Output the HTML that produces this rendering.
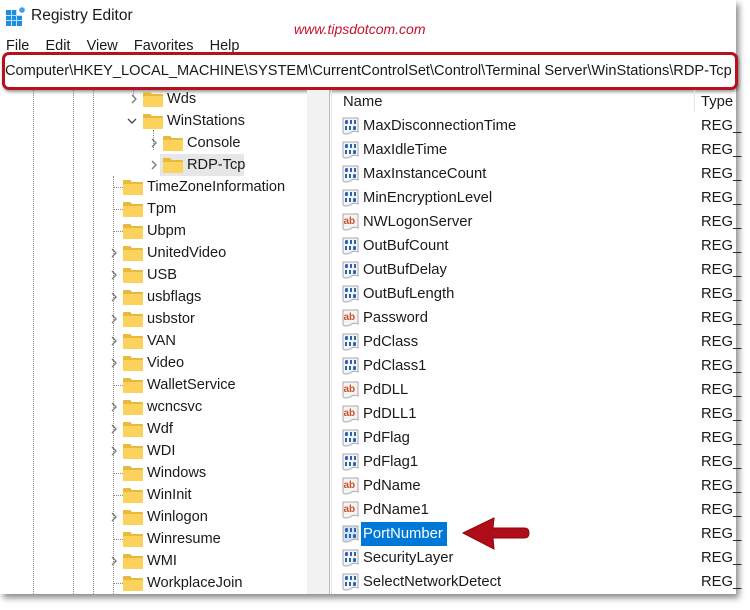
<!DOCTYPE html>
<html><head><style>
*{margin:0;padding:0;box-sizing:border-box}
body{width:750px;height:610px;background:#fff;position:relative;overflow:hidden;font-family:"Liberation Sans",sans-serif;color:#1a1a1a}
.win{position:absolute;left:0;top:0;width:736px;height:594px;background:#fff;box-shadow:3px 4px 6px rgba(0,0,0,.45)}
.a{position:absolute;white-space:nowrap}
.t{font-size:14.6px;line-height:22px;height:22px}
.r{font-size:14.8px;line-height:24px;height:24px}
.fold{position:absolute;width:20px;height:15px}
.chev{position:absolute;width:8px;height:10px}
.vd{position:absolute;width:0;border-left:1px dotted #888}
.hd{position:absolute;height:0;width:9px;border-top:1px dotted #888}
.ic{position:absolute;left:342px;width:17px;height:18px}
.ty{position:absolute;left:701px;font-size:14.8px;line-height:24px}
</style></head><body>
<div class="win">
<svg class="a" style="left:5px;top:5px" width="22" height="22" viewBox="0 0 22 22">
<rect x="1" y="5" width="16" height="16" fill="#1c8ee0"/>
<g stroke="#bfe0f8" stroke-width="1"><line x1="6.5" y1="5" x2="6.5" y2="21"/><line x1="11.5" y1="5" x2="11.5" y2="21"/><line x1="1" y1="10.5" x2="17" y2="10.5"/><line x1="1" y1="15.5" x2="17" y2="15.5"/></g>
<rect x="12" y="5" width="5" height="5" fill="#fff"/>
<circle cx="17" cy="5" r="3.3" fill="#3aa0e8" stroke="#fff" stroke-width="1"/>
</svg>
<div class="a" style="left:31px;top:7px;font-size:15.5px">Registry Editor</div>
<div class="a" style="left:294px;top:21px;font-size:14px;color:#c8102e;font-style:italic">www.tipsdotcom.com</div>
<div class="a" style="left:6px;top:38px;font-size:14.5px;word-spacing:0">File&nbsp;&nbsp;&nbsp; Edit&nbsp;&nbsp;&nbsp; View&nbsp;&nbsp;&nbsp; Favorites&nbsp;&nbsp;&nbsp; Help</div>
<div class="a" style="left:2px;top:52px;width:736px;height:38px;border:3px solid #b8101d;border-radius:7px;background:#fff;box-shadow:1px 2px 3px rgba(0,0,0,.4)"></div>
<div class="a" style="left:5px;top:63px;font-size:14.6px">Computer\HKEY_LOCAL_MACHINE\SYSTEM\CurrentControlSet\Control\Terminal Server\WinStations\RDP-Tcp</div>
<div class="a" style="left:307px;top:90px;width:22px;height:504px;background:#f2f2f2"></div>
<div class="a" style="left:329px;top:90px;width:1px;height:504px;background:#bbb"></div>
<div class="a" style="left:331px;top:90px;width:1px;height:504px;background:#e5e5e5"></div>
<div class="vd" style="left:33px;top:90px;height:504px"></div>
<div class="vd" style="left:73px;top:90px;height:504px"></div>
<div class="vd" style="left:93px;top:90px;height:504px"></div>
<div class="vd" style="left:113px;top:176px;height:418px"></div>
<div class="vd" style="left:133px;top:90px;height:6px"></div>
<div class="vd" style="left:153px;top:130px;height:20px"></div>
<div class="a" style="left:160px;top:154px;width:84px;height:22px;background:#e6e6e6"></div>
<div id="tree"></div>
<div class="a" style="left:343px;top:90px;font-size:14.8px;line-height:24px">Name</div>
<div class="a" style="left:694px;top:90px;width:1px;height:22px;background:#e5e5e5"></div>
<div class="a" style="left:701px;top:90px;font-size:14.8px;line-height:24px">Type</div>
<div class="a" style="left:361px;top:522px;width:86px;height:24px;background:#0078d7"></div>
<div id="list"></div>
<svg class="a" style="left:460px;top:515px" width="72" height="38" viewBox="0 0 72 38">
<path d="M3 18 L34 3 L33 13 L64 13 Q69 13 69 18 Q69 23 64 23 L33 23 L34 34 Z" fill="#b00d1a" stroke="#900" stroke-width="1"/>
</svg>
</div>
<script>
var T=[["Wds",143,1,0],["WinStations",143,2,0],["Console",163,1,0],["RDP-Tcp",163,1,0],["TimeZoneInformation",123,0,1],["Tpm",123,0,1],["Ubpm",123,0,1],["UnitedVideo",123,1,0],["USB",123,1,0],["usbflags",123,1,0],["usbstor",123,1,0],["VAN",123,1,0],["Video",123,1,0],["WalletService",123,0,1],["wcncsvc",123,1,0],["Wdf",123,1,0],["WDI",123,1,0],["Windows",123,0,1],["WinInit",123,0,1],["Winlogon",123,1,0],["Winresume",123,0,1],["WMI",123,1,0],["WorkplaceJoin",123,0,1]];
var h="";
T.forEach(function(e,i){var y=88+i*22,x=e[1];
h+='<svg class="fold" style="left:'+x+'px;top:'+(y+4)+'px" viewBox="0 0 20 15"><path d="M0 1 Q0 0 1 0 L7 0 L9 2 L19 2 Q20 2 20 3 L20 14 Q20 15 19 15 L1 15 Q0 15 0 14Z" fill="#e8b93a"/><rect x="0" y="4" width="20" height="11" rx="1" fill="#fbd35c"/></svg>';
if(e[2]==1)h+='<svg class="chev" style="left:'+(x-13)+'px;top:'+(y+6)+'px" viewBox="0 0 8 10"><path d="M2 1 L6 5 L2 9" fill="none" stroke="#777" stroke-width="1.3"/></svg>';
if(e[2]==2)h+='<svg class="chev" style="left:'+(x-16)+'px;top:'+(y+7)+'px;width:10px;height:8px" viewBox="0 0 10 8"><path d="M1 2 L5 6 L9 2" fill="none" stroke="#444" stroke-width="1.3"/></svg>';
if(e[3])h+='<div class="hd" style="left:114px;top:'+(y+11)+'px"></div>';
h+='<div class="a t" style="left:'+(x+24)+'px;top:'+y+'px">'+e[0]+'</div>';});
document.getElementById("tree").innerHTML=h;
var L=[["MaxDisconnectionTime",0],["MaxIdleTime",0],["MaxInstanceCount",0],["MinEncryptionLevel",0],["NWLogonServer",1],["OutBufCount",0],["OutBufDelay",0],["OutBufLength",0],["Password",1],["PdClass",0],["PdClass1",0],["PdDLL",1],["PdDLL1",1],["PdFlag",0],["PdFlag1",0],["PdName",1],["PdName1",1],["PortNumber",0],["SecurityLayer",0],["SelectNetworkDetect",0]];
h="";
L.forEach(function(e,i){var y=114+i*24,sel=i==17;
var bg=sel?"#cfe3f7":"#f4f4f4";
if(e[1])h+='<svg class="ic" style="top:'+(y+3)+'px" viewBox="0 0 17 18"><path d="M1 1 L16 1 L16 15 Q12 13 8 16 Q4 18 1 16Z" fill="'+bg+'" stroke="#aaa" stroke-width="1"/><text x="1.5" y="11" font-family="Liberation Sans" font-weight="bold" font-size="10" fill="#d2502a">ab</text></svg>';
else h+='<svg class="ic" style="top:'+(y+3)+'px" viewBox="0 0 17 18"><path d="M1 1 L16 1 L16 15 Q12 13 8 16 Q4 18 1 16Z" fill="'+bg+'" stroke="#aaa" stroke-width="1"/><g fill="#2b62b8"><rect x="3" y="3" width="3" height="4" rx="1.3"/><rect x="8" y="3" width="2" height="4"/><rect x="12" y="3" width="2" height="4"/><rect x="3" y="9" width="2" height="4"/><rect x="7" y="9" width="2" height="4"/><rect x="11" y="9" width="3" height="4" rx="1.3"/></g></svg>';
h+='<div class="a r" style="left:363px;top:'+y+'px;'+(sel?'color:#fff':'')+'">'+e[0]+'</div>';
h+='<div class="ty" style="top:'+y+'px">REG_</div>';});
document.getElementById("list").innerHTML=h;
</script>
</body></html>
